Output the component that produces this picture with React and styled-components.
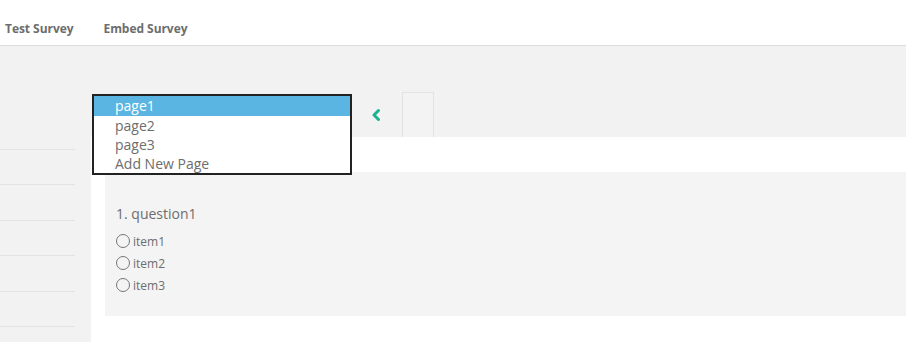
import React from 'react';
import styled, { createGlobalStyle } from 'styled-components';

const GlobalStyle = createGlobalStyle`
  html, body {
    margin: 0;
    padding: 0;
    background: #fff;
    font-family: "Open Sans", "Liberation Sans", sans-serif;
    color: #6d6d6d;
  }
`;

const Header = styled.header`
  height: 45px;
  display: flex;
  align-items: flex-end;
  background: #fff;
  border-bottom: 1px solid #dcdcdc;
  box-shadow: 0 1px 2px rgba(0, 0, 0, 0.06);
`;

const Tab = styled.a`
  font-size: 12px;
  font-weight: 700;
  color: #6d6d6d;
  letter-spacing: -0.05px;
  padding: 0 0 8px;
  margin-left: ${props => props.offset}px;
  text-decoration: none;
`;

const Body = styled.div`
  display: flex;
  height: 296px;
`;

const Sidebar = styled.aside`
  width: 91px;
  flex: none;
  background: #f2f2f2;
  padding-top: 68px;
`;

const SideItem = styled.div`
  width: 75px;
  height: 34.5px;
  border-bottom: 1px solid #e3e3e3;
`;

const Main = styled.main`
  flex: 1;
  display: flex;
  flex-direction: column;
`;

const Toolbar = styled.div`
  height: 91px;
  background: #f2f2f2;
  display: flex;
  align-items: flex-end;
`;

const SelectWrap = styled.div`
  position: relative;
  width: 260px;
  height: 91px;
  margin-left: 1px;
`;

const ListBox = styled.ul`
  position: absolute;
  left: 0;
  top: 48px;
  width: 256px;
  margin: 0;
  padding: 0;
  list-style: none;
  background: #fff;
  border: 2px solid #222;
  z-index: 2;
`;

const Option = styled.li`
  height: ${props => (props.selected ? 20 : 19)}px;
  line-height: ${props => (props.selected ? 20 : 19)}px;
  padding-left: 21px;
  font-size: 14px;
  color: ${props => (props.selected ? '#fff' : '#6d6d6d')};
  background: ${props => (props.selected ? '#5ab5e2' : 'transparent')};
`;

const NavButton = styled.button`
  width: 50px;
  height: 45px;
  border: none;
  background: transparent;
  display: flex;
  align-items: center;
  justify-content: center;
  padding: 0 3px 0 0;
  cursor: pointer;
`;

const PageTab = styled.div`
  width: 30px;
  height: 44px;
  background: #f3f3f3;
  border: 1px solid #e3e3e3;
  border-bottom: none;
`;

const Content = styled.div`
  flex: 1;
  background: #fff;
  padding: 35px 0 0 14px;
`;

const Question = styled.section`
  height: 144px;
  background: #f4f4f4;
  padding: 32px 0 0 11px;
  box-sizing: border-box;
`;

const Title = styled.h3`
  margin: 0 0 6px;
  font-size: 14px;
  font-weight: 400;
  color: #6d6d6d;
  line-height: 20px;
`;

const Choice = styled.label`
  display: flex;
  align-items: center;
  height: 22px;
  font-size: 12px;
  color: #6d6d6d;
`;

const Radio = styled.span`
  width: 12px;
  height: 12px;
  border: 1px solid #777;
  border-radius: 50%;
  margin-right: 3px;
`;

const pages = ['page1', 'page2', 'page3', 'Add New Page'];
const items = ['item1', 'item2', 'item3'];

export default function App() {
  return (
    <>
      <GlobalStyle />
      <Header>
        <Tab offset={5}>Test Survey</Tab>
        <Tab offset={30}>Embed Survey</Tab>
      </Header>
      <Body>
        <Sidebar>
          {[0, 1, 2, 3, 4, 5].map(i => (
            <SideItem key={i} />
          ))}
        </Sidebar>
        <Main>
          <Toolbar>
            <SelectWrap>
              <ListBox>
                {pages.map((p, i) => (
                  <Option key={p} selected={i === 0}>
                    {p}
                  </Option>
                ))}
              </ListBox>
            </SelectWrap>
            <NavButton aria-label="previous page">
              <svg width="10" height="14" viewBox="0 0 10 14">
                <path d="M7.5 2.5 L3 7 L7.5 11.5" fill="none" stroke="#1ab394" strokeWidth="3" strokeLinecap="round" strokeLinejoin="round" />
              </svg>
            </NavButton>
            <PageTab />
          </Toolbar>
          <Content>
            <Question>
              <Title>1. question1</Title>
              {items.map(it => (
                <Choice key={it}>
                  <Radio />
                  {it}
                </Choice>
              ))}
            </Question>
          </Content>
        </Main>
      </Body>
    </>
  );
}
